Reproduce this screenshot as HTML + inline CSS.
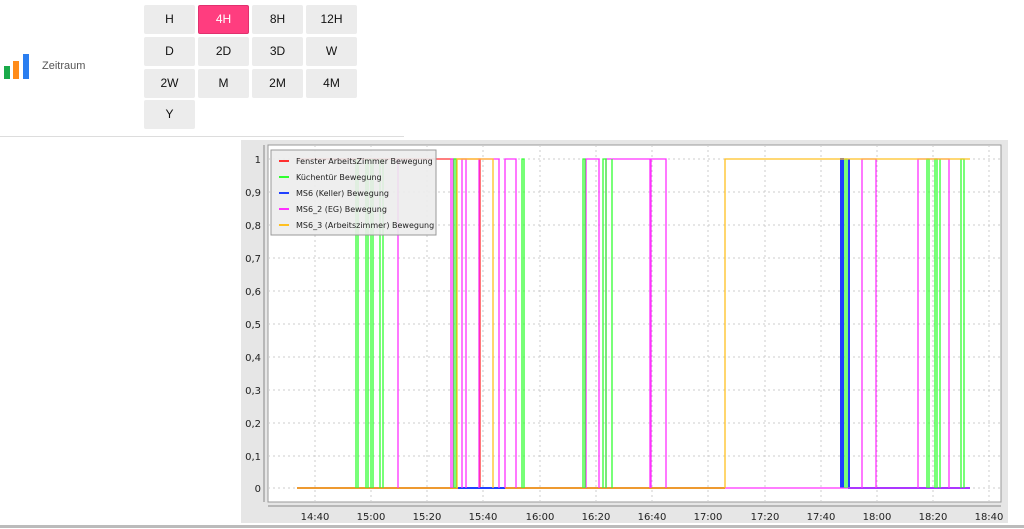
<!DOCTYPE html>
<html><head><meta charset="utf-8"><style>
*{margin:0;padding:0;box-sizing:border-box}
body{width:1024px;height:529px;background:#fff;font-family:"Liberation Sans",sans-serif;position:relative;overflow:hidden}
.b{position:absolute;width:51px;height:29px;background:#ececec;border-radius:2px;font-size:12px;color:#111;text-align:center;line-height:29px}
.a{background:#ff3d7f;color:#fff;border:1px solid #e0306e;line-height:27px}
</style></head><body>
<div style="position:absolute;left:4px;top:66px;width:6px;height:13px;background:#1aaa4a"></div>
<div style="position:absolute;left:13px;top:61px;width:6px;height:18px;background:#ff8c1a"></div>
<div style="position:absolute;left:23px;top:54px;width:6px;height:25px;background:#2a7ef0"></div>
<div style="position:absolute;left:42px;top:60px;font-size:11px;color:#555">Zeitraum</div>
<div class="b" style="left:144px;top:5px">H</div>
<div class="b a" style="left:198px;top:5px">4H</div>
<div class="b" style="left:252px;top:5px">8H</div>
<div class="b" style="left:306px;top:5px">12H</div>
<div class="b" style="left:144px;top:37px">D</div>
<div class="b" style="left:198px;top:37px">2D</div>
<div class="b" style="left:252px;top:37px">3D</div>
<div class="b" style="left:306px;top:37px">W</div>
<div class="b" style="left:144px;top:69px">2W</div>
<div class="b" style="left:198px;top:69px">M</div>
<div class="b" style="left:252px;top:69px">2M</div>
<div class="b" style="left:306px;top:69px">4M</div>
<div class="b" style="left:144px;top:100px">Y</div>
<div style="position:absolute;left:0;top:136px;width:404px;height:1px;background:#ddd"></div>
<div style="position:absolute;left:0;top:525px;width:1024px;height:3px;background:#bbb"></div>
<svg style="position:absolute;left:0;top:0" width="1024" height="529" font-family="DejaVu Sans, sans-serif">
<rect x="241" y="140" width="767" height="383" fill="#e6e6e6"/>
<rect x="268" y="145" width="733" height="357" fill="#fff" stroke="#999"/>
<g stroke="#ccc" stroke-dasharray="2,3">
<path d="M268 159H1001M268 192H1001M268 225H1001M268 258H1001M268 291H1001M268 324H1001M268 357H1001M268 390H1001M268 423H1001M268 456H1001M268 488H1001"/>
<path d="M315 145V502M371 145V502M427 145V502M483 145V502M540 145V502M596 145V502M652 145V502M708 145V502M765 145V502M821 145V502M877 145V502M933 145V502M989 145V502"/>
</g>
<path d="M268 506H1001" stroke="#888"/>
<path d="M264 145V502" stroke="#888"/>
<g font-size="10" fill="#222" text-anchor="end">
<text x="261" y="163">1</text><text x="261" y="196">0,9</text><text x="261" y="229">0,8</text><text x="261" y="262">0,7</text><text x="261" y="295">0,6</text><text x="261" y="328">0,5</text><text x="261" y="361">0,4</text><text x="261" y="394">0,3</text><text x="261" y="427">0,2</text><text x="261" y="460">0,1</text><text x="261" y="492">0</text>
</g>
<g font-size="10" fill="#222" text-anchor="middle">
<text x="315" y="520">14:40</text><text x="371" y="520">15:00</text><text x="427" y="520">15:20</text><text x="483" y="520">15:40</text><text x="540" y="520">16:00</text><text x="596" y="520">16:20</text><text x="652" y="520">16:40</text><text x="708" y="520">17:00</text><text x="765" y="520">17:20</text><text x="821" y="520">17:40</text><text x="877" y="520">18:00</text><text x="933" y="520">18:20</text><text x="989" y="520">18:40</text>
</g>
<g fill="none" stroke-width="1.3">
<path stroke="#ff3030" d="M297 159H480V488H487"/>
<path stroke="#ee9a30" stroke-width="2" d="M297 488H725"/>
<path stroke="#2040ff" stroke-width="2" d="M458 488H505M841 488V159H843V488M849 488V159V488H970"/>
<path stroke="#ff30ff" d="M725 488H970M398 488V159M451 488V159H453V488M462 488V159H466V488M479 488V159H499V488M505 488V159H516V488M586 488V159H599V488M606 488V159H650V488M651 488V159H666V488M862 488V159H876V488M918 488V159H949V488"/>
<path stroke="#30ff30" d="M356 488V159M358 488V159M366 488V159M368 488V159M371 488V159M373 488V159M380 488V159M383 488V159M454 488V159H456V488M522 488V159H524V488M583 488V159H585V488M603 488V159H606V488M612 488V159V488M845 488V159H847V488M927 488V159H929V488M935 488V159H937V488M940 488V159V488M961 488V159H964V488"/>
<path stroke="#ffc020" d="M457 488V159H493V488M725 488V159H970"/>
</g>
<rect x="271" y="150" width="165" height="85" fill="#ececec" fill-opacity=".9" stroke="#999"/>
<g stroke-width="2"><path stroke="#ff3030" d="M279 161H289"/><path stroke="#30ff30" d="M279 177H289"/><path stroke="#2040ff" d="M279 193H289"/><path stroke="#ff30ff" d="M279 209H289"/><path stroke="#ffc020" d="M279 225H289"/></g>
<g font-size="8" fill="#222">
<text x="296" y="164">Fenster ArbeitsZimmer Bewegung</text>
<text x="296" y="180">Küchentür Bewegung</text>
<text x="296" y="196">MS6 (Keller) Bewegung</text>
<text x="296" y="212">MS6_2 (EG) Bewegung</text>
<text x="296" y="228">MS6_3 (Arbeitszimmer) Bewegung</text>
</g>
</svg>
</body></html>
